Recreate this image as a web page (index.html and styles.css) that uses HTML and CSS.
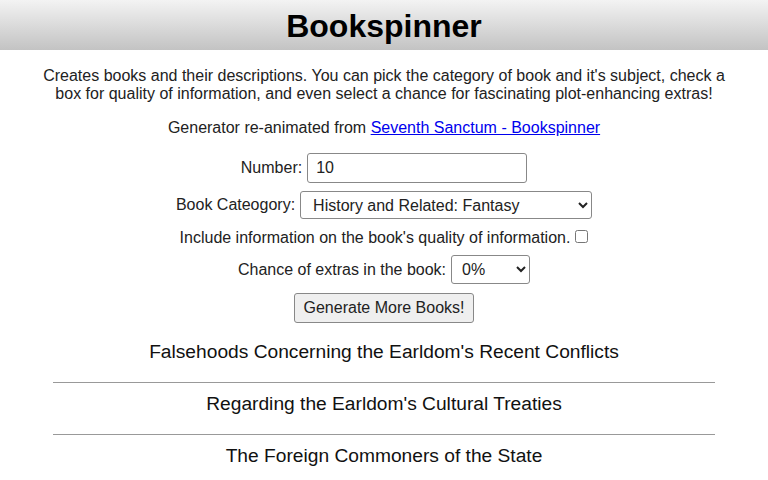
FILE: index.html
```html
<!DOCTYPE html>
<html lang="en">
<head>
    <meta charset="UTF-8">
    <title>Bookspinner</title>
    <link rel="stylesheet" href="styles.css">
</head>
<body>
<header>
    <h1>Bookspinner</h1>
</header>
<div class="container">
    <p class="intro">Creates books and their descriptions. You can pick the category of book and it's subject, check a box for quality of information, and even select a chance for fascinating plot-enhancing extras!</p>
    <p class="credit">Generator re-animated from <a href="#">Seventh Sanctum - Bookspinner</a></p>

    <form id="book-form">
        <div class="row">
            <label for="number">Number:</label>
            <input type="text" id="number" class="number-input" value="10">
        </div>
        <div class="row">
            <label for="category">Book Cateogory:</label>
            <select id="category" class="category-select">
                <option>History and Related: Fantasy</option>
            </select>
        </div>
        <div class="row check-row">
            <label for="quality">Include information on the book's quality of information.</label>
            <input type="checkbox" id="quality" class="check">
        </div>
        <div class="row">
            <label for="extras">Chance of extras in the book:</label>
            <select id="extras" class="extras-select">
                <option>0%</option>
            </select>
        </div>
        <div class="row">
            <button type="button">Generate More Books!</button>
        </div>
    </form>

    <div id="book-list">
        <div class="book">Falsehoods Concerning the Earldom's Recent Conflicts</div>
        <hr>
        <div class="book">Regarding the Earldom's Cultural Treaties</div>
        <hr>
        <div class="book">The Foreign Commoners of the State</div>
    </div>
</div>
</body>
</html>
```

FILE: styles.css
```css
/* General */
* {
    box-sizing: border-box;
}

body {
    margin: 0;
    font-family: 'Liberation Sans', Arial, sans-serif;
    font-size: 16px;
    color: #222;
    background: #fff;
}

header {
    height: 50px;
    background: linear-gradient(to bottom, #f3f3f3, #c3c3c3);
    text-align: center;
}

header h1 {
    margin: 0;
    font-size: 32px;
    line-height: 52px;
    color: #000;
}

.container {
    padding: 0 16px;
    text-align: center;
}

.intro {
    margin: 17px 24px 0;
    line-height: 18px;
}

.credit {
    margin: 16px 0 16px;
    line-height: 18px;
}

.credit a {
    color: #0000ee;
}

/* Form */
#book-form {
    display: flex;
    flex-direction: column;
    align-items: center;
    gap: 8px;
}

.row {
    display: flex;
    align-items: center;
    gap: 5px;
}

.check-row {
    min-height: 19px;
    margin-top: 1px;
}

input, select, button {
    font-family: inherit;
    font-size: 16px;
    color: #222;
}

.number-input {
    width: 220px;
    height: 30px;
    padding: 0 8px;
    border: 1px solid #888;
    border-radius: 3px;
}

select {
    height: 28px;
    padding: 0 4px;
    border: 1px solid #888;
    border-radius: 3px;
    background: #fff;
}

.category-select {
    width: 292px;
    padding-left: 8px;
}

.extras-select {
    width: 79px;
    height: 29px;
    padding-left: 6px;
}

.check {
    width: 13px;
    height: 13px;
    margin: 0 0 2px;
}

button {
    height: 30px;
    padding: 0 9px;
    margin-top: 1px;
    border: 1px solid #888;
    border-radius: 3px;
    background: #efefef;
}

/* Results */
#book-list {
    margin-top: 17px;
}

.book {
    font-size: 19.2px;
    line-height: 24px;
    color: #111;
}

hr {
    width: 90%;
    margin: 18px auto 9px;
    border: none;
    border-top: 1px solid #999;
}
```
